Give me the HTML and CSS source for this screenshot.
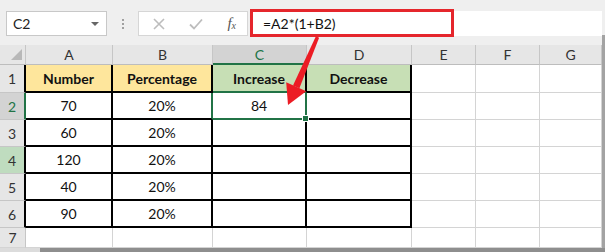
FILE: index.html
```html
<!DOCTYPE html>
<html lang="en">
<head>
    <meta charset="UTF-8">
    <title>Increase by percentage</title>
    <link rel="stylesheet" href="styles.css">
</head>
<body>
    <div class="app">
        <div class="formula-row">
            <div class="namebox">
                <span>C2</span>
                <span class="caret"></span>
            </div>
            <div class="grip"><i></i><i></i><i></i></div>
            <div class="fx-buttons">
                <svg width="12" height="12" viewBox="0 0 12 12"><path d="M1 1 L11 11 M11 1 L1 11" stroke="#bdbdbd" stroke-width="1.6" fill="none"/></svg>
                <svg width="14" height="12" viewBox="0 0 14 12"><path d="M1 6.5 L5 10.5 L13 1.5" stroke="#bdbdbd" stroke-width="1.8" fill="none"/></svg>
                <span class="fx">f<sub>x</sub></span>
            </div>
            <div class="formula">
                <div class="formula-text">=A2*(1+B2)</div>
            </div>
        </div>

        <div class="grid-area">
            <table class="sheet">
                <colgroup>
                    <col style="width: 26px">
                    <col style="width: 87px">
                    <col style="width: 100px">
                    <col style="width: 94px">
                    <col style="width: 105px">
                    <col style="width: 64px">
                    <col style="width: 64px">
                    <col style="width: 62px">
                </colgroup>
                <tr class="col-head">
                    <th class="corner"><svg width="11" height="11" viewBox="0 0 11 11"><path d="M11 0 L11 11 L0 11 Z" fill="#b8b8b8"/></svg></th>
                    <th>A</th>
                    <th>B</th>
                    <th class="active">C</th>
                    <th>D</th>
                    <th>E</th>
                    <th>F</th>
                    <th>G</th>
                </tr>
                <tr class="r1">
                    <th class="rh edge">1</th>
                    <td class="box title yellow">Number</td>
                    <td class="box title yellow">Percentage</td>
                    <td class="box title green sel-top">Increase</td>
                    <td class="box title green">Decrease</td>
                    <td></td><td></td><td></td>
                </tr>
                <tr class="r">
                    <th class="rh edge active">2</th>
                    <td class="box">70</td>
                    <td class="box sel-left">20%</td>
                    <td class="box selected">84</td>
                    <td class="box"></td>
                    <td></td><td></td><td></td>
                </tr>
                <tr class="r">
                    <th class="rh edge">3</th>
                    <td class="box">60</td>
                    <td class="box">20%</td>
                    <td class="box"></td>
                    <td class="box"></td>
                    <td></td><td></td><td></td>
                </tr>
                <tr class="r">
                    <th class="rh edge tint">4</th>
                    <td class="box">120</td>
                    <td class="box">20%</td>
                    <td class="box"></td>
                    <td class="box"></td>
                    <td></td><td></td><td></td>
                </tr>
                <tr class="r">
                    <th class="rh edge">5</th>
                    <td class="box">40</td>
                    <td class="box">20%</td>
                    <td class="box"></td>
                    <td class="box"></td>
                    <td></td><td></td><td></td>
                </tr>
                <tr class="r">
                    <th class="rh edge">6</th>
                    <td class="box">90</td>
                    <td class="box">20%</td>
                    <td class="box"></td>
                    <td class="box"></td>
                    <td></td><td></td><td></td>
                </tr>
                <tr class="r7">
                    <th class="rh">7</th>
                    <td></td><td></td><td></td><td></td><td></td><td></td><td></td>
                </tr>
            </table>
            <div class="scrollbar"></div>
        </div>
        <div class="bottom-bar"><div class="shade"></div></div>
    </div>

    <!-- annotation arrow from the formula to the result cell -->
    <svg class="arrow" width="605" height="252" viewBox="0 0 605 252">
        <polygon points="319.1,37.7 315.9,36.3 293.0,85.4 299.4,88.2" fill="#ec1c24"/>
        <polygon points="288,105 286.2,82.3 306.2,91.3" fill="#ec1c24"/>
    </svg>
</body>
</html>
```

FILE: styles.css
```css
body {
    margin: 0;
    width: 605px;
    height: 252px;
    overflow: hidden;
    background-color: #efefef;
    font-family: Lato, "Liberation Sans", sans-serif;
    position: relative;
}

.app {
    display: flex;
    flex-direction: column;
    height: 252px;
}

.formula-row {
    display: flex;
    height: 25px;
    margin-top: 11px;
    padding-left: 6px;
    padding-right: 3px;
}

.namebox {
    width: 101px;
    box-sizing: border-box;
    background: #fff;
    border: 1px solid #c8c8c8;
    display: flex;
    align-items: center;
    justify-content: space-between;
    padding: 0 7px 0 6px;
    font-size: 14px;
    color: #222;
}

.caret {
    width: 0;
    height: 0;
    border-left: 4px solid transparent;
    border-right: 4px solid transparent;
    border-top: 4px solid #666;
}

.grip {
    width: 31px;
    display: flex;
    flex-direction: column;
    align-items: center;
    justify-content: center;
    gap: 2px;
}

.grip i {
    display: block;
    width: 2px;
    height: 2px;
    background: #a0a0a0;
}

.fx-buttons {
    width: 110px;
    box-sizing: border-box;
    background: #fff;
    border: 1px solid #d6d6d6;
    display: flex;
    align-items: center;
    justify-content: space-between;
    padding: 0 11px 0 14px;
}

.fx {
    font-family: "Liberation Serif", serif;
    font-style: italic;
    font-size: 15px;
    color: #555;
}

.fx sub {
    font-size: 10px;
    vertical-align: -1px;
}

.formula {
    flex: 1;
    margin-left: 2px;
    background: #fff;
    display: flex;
}

.formula-text {
    width: 204px;
    box-sizing: border-box;
    margin: -2px 0 -1px 0;
    border: 3px solid #e5262c;
    padding-left: 10px;
    display: flex;
    align-items: center;
    font-size: 14px;
    color: #111;
}

.grid-area {
    display: flex;
    padding-top: 9px;
}

.sheet {
    width: 602px;
    table-layout: fixed;
    border-collapse: separate;
    border-spacing: 0;
    background: #fff;
}

.sheet th,
.sheet td {
    padding: 0;
    border-right: 1px solid #d4d4d4;
    border-bottom: 1px solid #d4d4d4;
    text-align: center;
    vertical-align: middle;
    font-size: 14px;
    color: #111;
}

.col-head {
    height: 20px;
}

.col-head th {
    background: #e6e6e6;
    font-weight: normal;
    font-size: 14px;
    color: #333;
    border-right: 1px solid #c6c6c6;
    border-bottom: 1px solid #bdbdbd;
}

.col-head th.active {
    background: #d3d3d3;
    color: #217346;
    border-bottom: 2px solid #217346;
}

.corner {
    text-align: right !important;
    vertical-align: bottom !important;
}

.corner svg {
    display: block;
    margin: 0 3px 4px auto;
}

.r1 {
    height: 28px;
}

.r {
    height: 27px;
}

.r7 {
    height: 20px;
}

.rh {
    background: #e6e6e6;
    font-weight: normal;
    font-size: 14px !important;
    color: #333 !important;
}

.rh.edge {
    border-right: 2px solid #000;
    border-bottom-color: #c6c6c6;
}

.rh.active {
    background: #d3d3d3;
    color: #217346 !important;
    border-right-color: #217346;
}

.rh.tint {
    background: #bfdcbf;
}

.r7 .rh {
    border-right-color: #c6c6c6;
}

.box {
    border-right: 2px solid #000 !important;
    border-bottom: 2px solid #000 !important;
}

.title {
    font-weight: bold;
}

.yellow {
    background: #fee69c;
}

.green {
    background: #c7dfb5;
}

.sel-top {
    border-bottom-color: #217346 !important;
}

.sel-left {
    border-right-color: #217346 !important;
}

.selected {
    position: relative;
    border-right-color: #217346 !important;
    border-bottom-color: #217346 !important;
}

.selected::after {
    content: "";
    position: absolute;
    right: -4px;
    bottom: -4px;
    width: 5px;
    height: 5px;
    background: #217346;
    border: 1px solid #fff;
}

.scrollbar {
    width: 3px;
    margin-top: -10px;
    background: #a3a3a3;
}

.bottom-bar {
    flex: 1;
    background: #dcdcdc;
    display: flex;
    padding-left: 40px;
}

.shade {
    flex: 1;
    background: #8e8e8e;
}

.arrow {
    position: absolute;
    left: 0;
    top: 0;
    pointer-events: none;
}
```
